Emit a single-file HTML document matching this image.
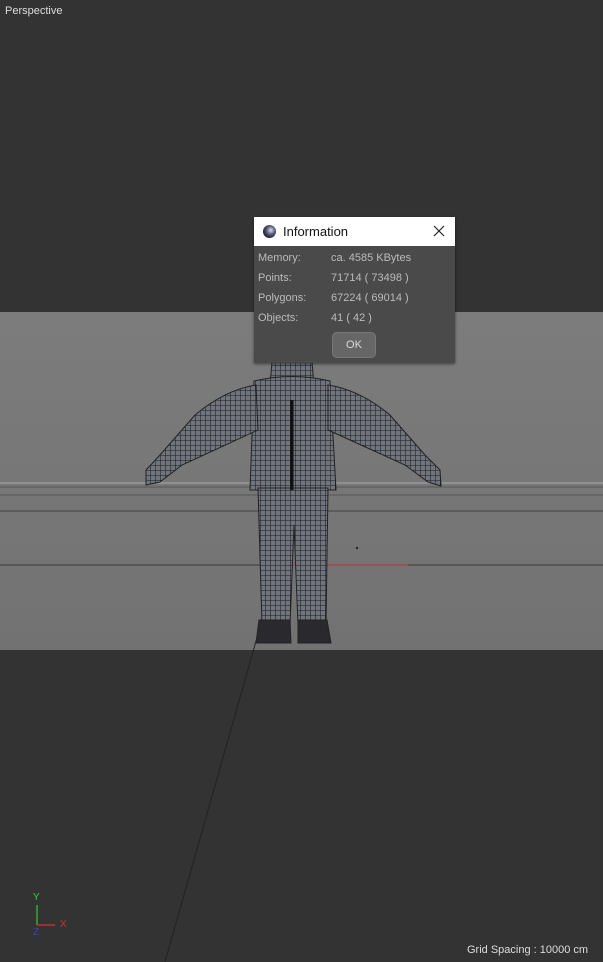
<!DOCTYPE html>
<html><head><style>
body{margin:0;width:603px;height:962px;background:#333;position:relative;overflow:hidden;font-family:"Liberation Sans",sans-serif}
.t{position:absolute;color:#ddd;font-size:11px}
</style></head><body>
<svg width="603" height="962" style="position:absolute;left:0;top:0">
<defs>
<pattern id="mesh" width="5" height="5" patternUnits="userSpaceOnUse">
<rect width="5" height="5" fill="#70747c"/>
<path d="M0 0H5M0 0V5" stroke="#1c1c20" stroke-width="1.1"/>
</pattern>
<linearGradient id="band" x1="0" y1="0" x2="0" y2="1"><stop offset="0" stop-color="#7c7c7c"/><stop offset="1" stop-color="#727272"/></linearGradient>
</defs>
<rect x="0" y="312" width="603" height="338" fill="url(#band)"/>
<line x1="0" y1="483" x2="603" y2="483" stroke="#aaa" stroke-width="1"/>
<line x1="0" y1="487" x2="603" y2="487" stroke="#555" stroke-width="1"/>
<line x1="0" y1="495" x2="603" y2="495" stroke="#555" stroke-width="1"/>
<line x1="0" y1="511" x2="603" y2="511" stroke="#444" stroke-width="1"/>
<line x1="0" y1="565" x2="603" y2="565" stroke="#3a3a3a" stroke-width="1"/>
<line x1="292" y1="565" x2="408" y2="565" stroke="#b33" stroke-width="1"/>
<line x1="262" y1="620" x2="165" y2="962" stroke="#222" stroke-width="1"/>
<circle cx="357" cy="548" r="1.2" fill="#222"/>
<g fill="url(#mesh)" stroke="#222" stroke-width="1">
<path d="M272 362 Q292 352 312 362 L314 385 L270 385Z"/>
<path d="M254 381 Q292 372 330 381 L336 490 L250 490Z"/>
<path d="M256 385 Q225 390 195 415 L160 455 L146 470 L146 485 L160 482 L182 465 L258 430Z"/>
<path d="M328 385 Q360 390 390 415 L425 455 L440 470 L441 486 L428 482 L405 465 L328 430Z"/>
<path d="M258 488 L328 488 L326 625 L298 625 L294 525 L290 625 L262 625Z"/>
<path d="M259 620 L290 620 L291 643 L256 643Z" fill="#2a2a2e"/>
<path d="M298 620 L327 620 L331 643 L298 643Z" fill="#2a2a2e"/>
</g>
<line x1="292" y1="400" x2="292" y2="490" stroke="#111" stroke-width="3"/>
<line x1="37" y1="905" x2="37" y2="925" stroke="#3a3" stroke-width="1.5"/>
<line x1="37" y1="925" x2="55" y2="925" stroke="#b33" stroke-width="1.5"/>
</svg>
<div class="t" style="left:5px;top:5px">Perspective</div>
<div class="t" style="left:33px;top:892px;color:#3c3;font-size:10px">Y</div>
<div class="t" style="left:60px;top:919px;color:#c33;font-size:10px">X</div>
<div class="t" style="left:33px;top:927px;color:#34c;font-size:10px">Z</div>
<div class="t" style="left:467px;top:944px;color:#ddd">Grid Spacing : 10000 cm</div>
<div style="position:absolute;left:254px;top:217px;width:201px;height:146px;background:#4a4a4a;box-shadow:0 1px 3px rgba(0,0,0,.5)">
<div style="height:29px;background:#fff;position:relative">
<div style="position:absolute;left:9px;top:8px;width:13px;height:13px;border-radius:50%;background:radial-gradient(circle at 60% 40%,#dde 0,#557 40%,#112 80%)"></div>
<div style="position:absolute;left:29px;top:7px;font-size:13px;color:#111">Information</div>
<svg style="position:absolute;right:10px;top:8px" width="12" height="12"><path d="M1 1L11 11M11 1L1 11" stroke="#222" stroke-width="1.2"/></svg>
</div>
<div style="color:#bbb;font-size:11px;position:relative">
<div style="position:absolute;left:4px;top:6px">Memory:</div><div style="position:absolute;left:77px;top:6px">ca. 4585 KBytes</div>
<div style="position:absolute;left:4px;top:26px">Points:</div><div style="position:absolute;left:77px;top:26px">71714 ( 73498 )</div>
<div style="position:absolute;left:4px;top:46px">Polygons:</div><div style="position:absolute;left:77px;top:46px">67224 ( 69014 )</div>
<div style="position:absolute;left:4px;top:66px">Objects:</div><div style="position:absolute;left:77px;top:66px">41 ( 42 )</div>
<div style="position:absolute;left:78px;top:86px;width:42px;height:24px;border-radius:5px;background:#666;border:1px solid #777;color:#ddd;text-align:center;line-height:24px">OK</div>
</div>
</div>
</body></html>
